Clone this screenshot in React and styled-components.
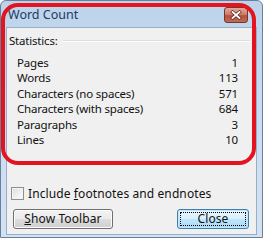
import React from 'react'
import styled, { createGlobalStyle } from 'styled-components'

const GlobalStyle = createGlobalStyle`
  html, body {
    margin: 0;
    padding: 0;
    background: #ffffff;
  }
  body {
    font-family: "Noto Sans", "Open Sans", sans-serif;
    font-size: 11.5px;
    letter-spacing: -0.2px;
    color: #111;
  }
`

const Stage = styled.div`
  position: relative;
  width: 263px;
  height: 241px;
  overflow: hidden;
`

const Window = styled.div`
  box-sizing: border-box;
  width: 263px;
  height: 238px;
  border: 1px solid #6b7f99;
  border-radius: 6px 6px 0 0;
  background: linear-gradient(180deg, #bcd3eb 0%, #c9dcf0 40%, #d3e2f3 100%);
  display: flex;
  flex-direction: column;
  padding: 0 5px 2px 5px;
`

const TitleBar = styled.div`
  height: 26px;
  display: flex;
  align-items: center;
  justify-content: space-between;
  padding: 0 9px 0 2px;
`

const Title = styled.span`
  font-size: 12.5px;
  letter-spacing: 0;
  color: #1e3a5f;
`

const CloseButton = styled.div`
  box-sizing: border-box;
  width: 24px;
  height: 16px;
  margin-top: 2px;
  border: 1px solid #6a3a33;
  border-radius: 3px;
  background: linear-gradient(180deg, #e3a899 0%, #d07d6a 45%, #b9503b 55%, #c56a55 100%);
  display: flex;
  align-items: center;
  justify-content: center;
`

const Client = styled.div`
  flex: 1;
  background: #f0f0f0;
  border: 1px solid #9aaec6;
  display: flex;
  flex-direction: column;
  padding: 5px 18px 0 2px;
`

const Section = styled.div`
  display: flex;
  align-items: center;
  gap: 5px;
  line-height: 15px;
`

const Rule = styled.div`
  flex: 1;
  height: 1px;
  background: #d5dfe5;
  border-bottom: 1px solid #ffffff;
  margin-right: -12px;
`

const Stats = styled.div`
  margin-top: 7px;
  padding-left: 8px;
  display: flex;
  flex-direction: column;
`

const Row = styled.div`
  display: flex;
  justify-content: space-between;
  height: 15.4px;
  line-height: 15px;
`

const CheckRow = styled.label`
  display: flex;
  align-items: center;
  gap: 4px;
  margin-top: 39px;
  padding-left: 2px;
  line-height: 15px;
  font-size: 12px;
  letter-spacing: 0.1px;
`

const Box = styled.span`
  box-sizing: border-box;
  width: 13px;
  height: 13px;
  border: 1px solid #8e8f8f;
  background: linear-gradient(135deg, #dcdcdc 0%, #f4f4f4 70%, #fafafa 100%);
  box-shadow: inset 0 0 0 1px #f4f4f4;
`

const Buttons = styled.div`
  display: flex;
  justify-content: space-between;
  margin-top: 8px;
  margin-right: -11px;
  padding-left: 4px;
`

const Button = styled.div`
  box-sizing: border-box;
  width: ${p => p.w}px;
  height: 20px;
  border: 1px solid ${p => (p.focused ? '#3c7fb1' : '#707070')};
  border-radius: 3px;
  background: ${p =>
    p.focused
      ? 'linear-gradient(180deg, #eaf6fd 0%, #d9f0fc 50%, #bee6fd 51%, #a7d9f5 100%)'
      : 'linear-gradient(180deg, #f2f2f2 0%, #ebebeb 50%, #dddddd 51%, #cfcfcf 100%)'};
  box-shadow: inset 0 0 0 1px ${p => (p.focused ? '#c4e5f6' : '#fcfcfc')};
  display: flex;
  align-items: center;
  justify-content: center;
  padding: 2px;
  font-size: 12px;
  letter-spacing: 0.1px;
`

const Face = styled.span`
  box-sizing: border-box;
  flex: 1;
  align-self: stretch;
  display: flex;
  align-items: center;
  justify-content: center;
  border: 1px dotted ${p => (p.focused ? '#000' : 'transparent')};
  line-height: 14px;
`

const U = styled.span`
  text-decoration: underline;
`

const Annotation = styled.div`
  position: absolute;
  left: 1px;
  top: 3px;
  width: 255px;
  height: 162px;
  box-sizing: border-box;
  border: 4px solid #e3141f;
  border-radius: 17px;
  pointer-events: none;
`

const stats = [
  ['Pages', 1],
  ['Words', 113],
  ['Characters (no spaces)', 571],
  ['Characters (with spaces)', 684],
  ['Paragraphs', 3],
  ['Lines', 10],
]

export default function App() {
  return (
    <Stage>
      <GlobalStyle />
      <Window>
        <TitleBar>
          <Title>Word Count</Title>
          <CloseButton>
            <svg width="12" height="10" viewBox="0 0 12 10">
              <path d="M2.5 2 L9.5 8 M9.5 2 L2.5 8" stroke="#5a2a22" strokeWidth="3.2" strokeLinecap="square" />
              <path d="M2.5 2 L9.5 8 M9.5 2 L2.5 8" stroke="#ffffff" strokeWidth="1.8" strokeLinecap="square" />
            </svg>
          </CloseButton>
        </TitleBar>
        <Client>
          <Section>
            <span>Statistics:</span>
            <Rule />
          </Section>
          <Stats>
            {stats.map(([label, value]) => (
              <Row key={label}>
                <span>{label}</span>
                <span>{value}</span>
              </Row>
            ))}
          </Stats>
          <CheckRow>
            <Box />
            <span>
              Include <U>f</U>ootnotes and endnotes
            </span>
          </CheckRow>
          <Buttons>
            <Button w={100}>
              <Face>
                <U>S</U>how Toolbar
              </Face>
            </Button>
            <Button w={72} focused>
              <Face focused>Close</Face>
            </Button>
          </Buttons>
        </Client>
      </Window>
      <Annotation />
    </Stage>
  )
}
